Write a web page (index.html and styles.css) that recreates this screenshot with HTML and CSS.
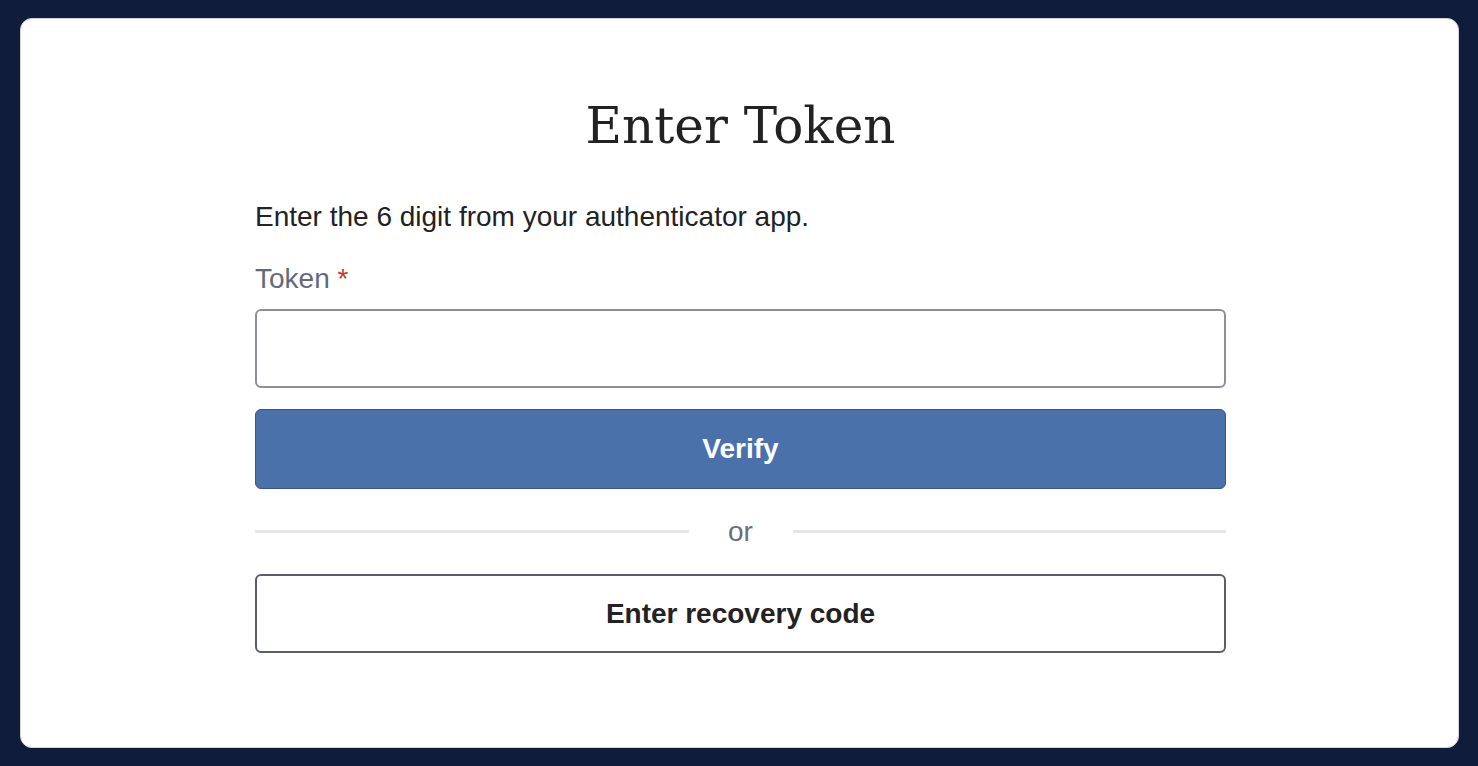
FILE: index.html
```html
<!DOCTYPE html>
<html lang="en">
<head>
<meta charset="utf-8">
<title>Enter Token</title>
<link rel="stylesheet" href="styles.css">
</head>
<body>
<main class="card">
  <div class="content">
    <h1 class="title">Enter Token</h1>
    <p class="intro">Enter the 6 digit from your authenticator app.</p>
    <label class="label" for="token">Token <span class="req">*</span></label>
    <input class="input" id="token" type="text">
    <button class="btn btn-primary" type="button">Verify</button>
    <div class="divider"><span class="line"></span><span class="or">or</span><span class="line"></span></div>
    <button class="btn btn-outline" type="button">Enter recovery code</button>
  </div>
</main>
</body>
</html>
```
FILE: styles.css
```css
html, body {
  margin: 0;
  padding: 0;
  height: 100%;
}
body {
  background: #0f1d3a;
  padding: 18px 19px 18px 20px;
  box-sizing: border-box;
  font-family: "Liberation Sans", Arial, sans-serif;
}
.card {
  background: #ffffff;
  border: 1px solid #d2d4da;
  border-radius: 12px;
  height: 100%;
  box-sizing: border-box;
  padding-left: 2px;
  display: flex;
  justify-content: center;
}
.content {
  width: 971px;
  display: flex;
  flex-direction: column;
}
.title {
  font-family: "DejaVu Serif", Georgia, serif;
  font-weight: normal;
  font-size: 50px;
  color: #222222;
  text-align: center;
  margin: 71px 0 0;
  line-height: 72px;
}
.intro {
  font-size: 28px;
  color: #222222;
  margin: 39px 0 0;
  line-height: 32px;
}
.label {
  font-size: 28px;
  color: #5f6b7a;
  margin-top: 30px;
  line-height: 32px;
}
.req {
  color: #c7372f;
}
.input {
  margin-top: 14px;
  height: 79px;
  box-sizing: border-box;
  border: 2px solid #8e9099;
  border-radius: 6px;
  font-size: 28px;
  padding: 0 16px;
  font-family: inherit;
}
.btn {
  height: 80px;
  box-sizing: border-box;
  border-radius: 6px;
  font-family: inherit;
  font-size: 28px;
  font-weight: bold;
  cursor: pointer;
}
.btn-primary {
  margin-top: 21px;
  background: #4a71a9;
  border: 1px solid #34578c;
  color: #ffffff;
}
.btn-outline {
  height: 79px;
  background: #ffffff;
  border: 2px solid #5b5e68;
  color: #222222;
}
.divider {
  display: flex;
  align-items: center;
  height: 85px;
}
.line {
  flex: 1;
  height: 3px;
  background: #e6e6e9;
}
.or {
  width: 104px;
  text-align: center;
  font-size: 28px;
  color: #676f7c;
}
```
